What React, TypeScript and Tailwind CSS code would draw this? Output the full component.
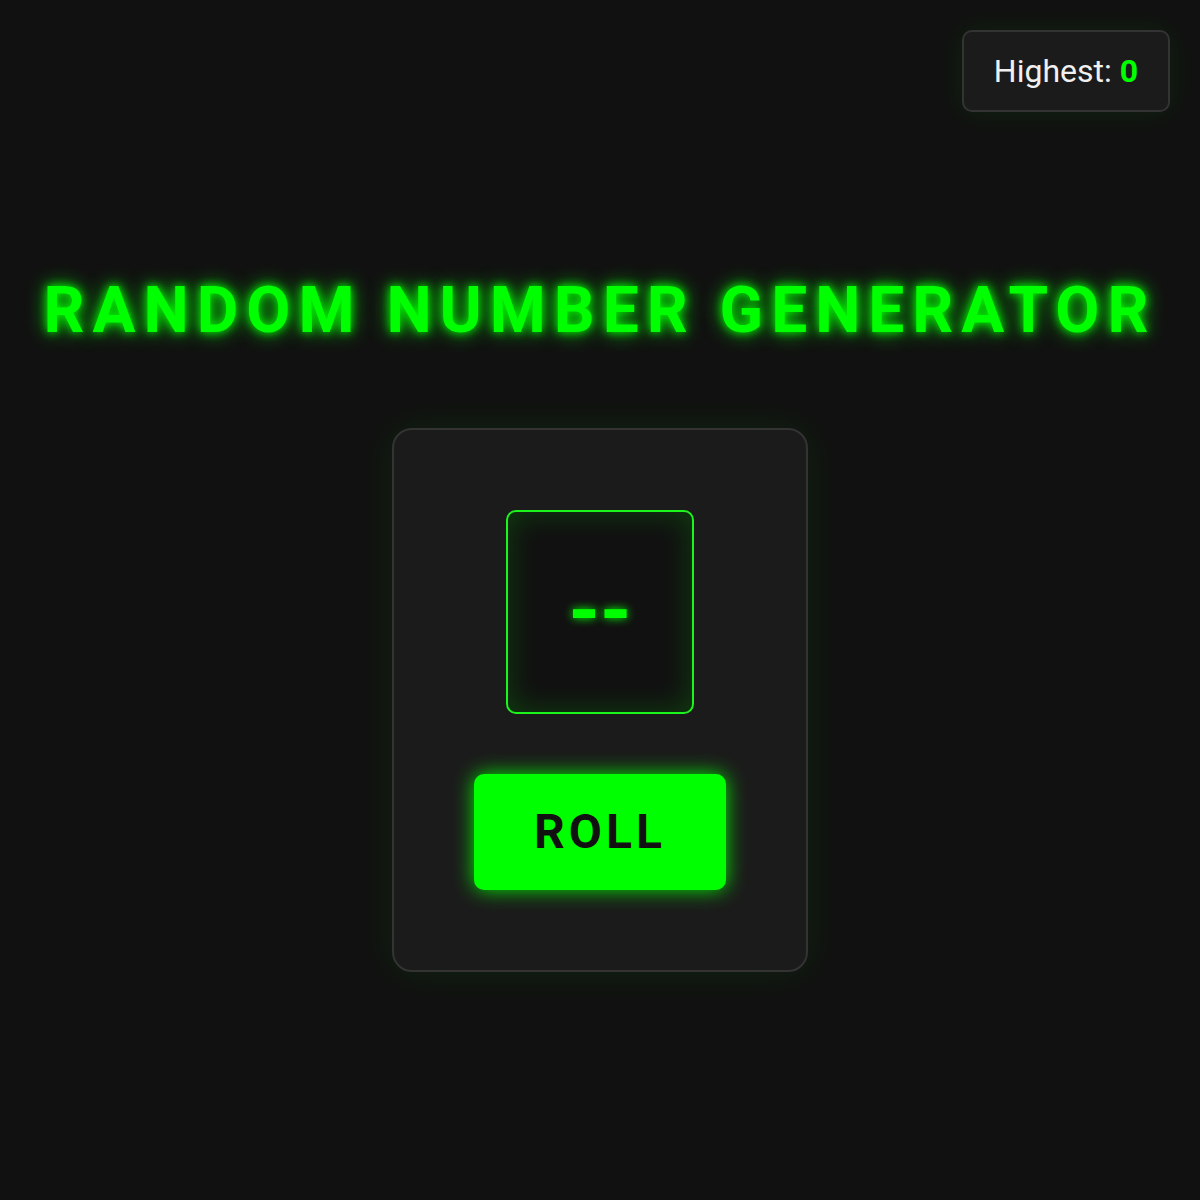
import React, { useState } from 'react';

const MAX_NUMBER = 100;

const HighestScore = ({ value }: { value: number }) => (
  <aside className="absolute top-[30px] right-[30px] px-[30px] py-5 bg-[#1b1b1b] border-2 border-[#333333] rounded-[10px] text-[32px] leading-[38px] text-[#f0f0f0] shadow-[0_0_30px_rgba(0,255,0,0.08)]">
    Highest: <span className="font-bold text-[#00ff00]">{value}</span>
  </aside>
);

export default function App() {
  const [current, setCurrent] = useState<number | null>(null);
  const [highest, setHighest] = useState(0);

  const handleRoll = () => {
    const next = Math.floor(Math.random() * MAX_NUMBER) + 1;
    setCurrent(next);
    setHighest((prev) => Math.max(prev, next));
  };

  return (
    <div className="relative min-h-screen bg-[#111111] font-['Roboto',sans-serif] flex flex-col items-center justify-center">
      <HighestScore value={highest} />

      <h1 className="mt-11 mb-20 text-center text-[64px] leading-[75px] font-bold uppercase tracking-[8px] text-[#00ff00] [text-shadow:0_0_10px_#00ff00,0_0_20px_rgba(0,255,0,0.8)]">
        Random Number Generator
      </h1>

      <main className="flex flex-col items-center gap-[60px] p-20 bg-[#1b1b1b] border-2 border-[#333333] rounded-[20px] shadow-[0_0_40px_rgba(0,255,0,0.08)]">
        <output className="flex items-center justify-center h-[204px] px-[60px] bg-[#111111] border-2 border-[#1bf51b] rounded-[10px] text-[80px] leading-[93px] font-bold text-[#00ff00] [text-shadow:0_0_10px_#00ff00] shadow-[inset_0_0_30px_rgba(0,255,0,0.2)]">
          {current ?? '--'}
        </output>
        <button
          type="button"
          onClick={handleRoll}
          className="px-[60px] py-[30px] bg-[#00ff00] rounded-[10px] text-[48px] leading-[56px] font-bold uppercase tracking-[4px] text-[#111111] shadow-[0_0_20px_rgba(0,255,0,0.9)] cursor-pointer hover:bg-[#00cc00] transition-colors"
        >
          Roll
        </button>
      </main>
    </div>
  );
}
